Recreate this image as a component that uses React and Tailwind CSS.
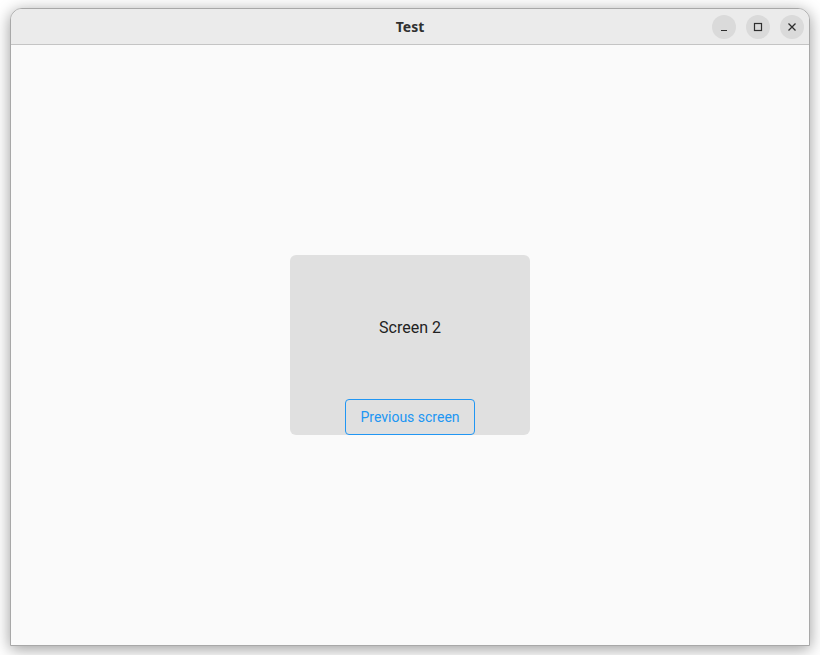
import React from "react";

const App = () => {
  return (
    <div className="w-[820px] h-[655px] bg-white pt-[8px] pl-[10px] overflow-hidden">
      {/* Window */}
      <div className="w-[800px] h-[638px] flex flex-col rounded-t-[12px] border border-[#a8a8a8] bg-[#fafafa] shadow-[0_3px_16px_rgba(0,0,0,0.4)] overflow-hidden">
        {/* Title bar */}
        <div className="relative h-[36px] shrink-0 flex items-center justify-center bg-[#ebebeb] border-b border-[#c4c4c4]">
          <span className="text-[14px] font-bold text-[#303030] font-['Noto_Sans',sans-serif]">
            Test
          </span>
          <div className="absolute right-[5px] top-[6px] flex gap-[10px]">
            <button className="w-[24px] h-[24px] rounded-full bg-[#dadada] flex items-center justify-center">
              <svg width="10" height="10" viewBox="0 0 10 10">
                <path d="M2 8.5h6" stroke="#2e2e2e" strokeWidth="1.2" />
              </svg>
            </button>
            <button className="w-[24px] h-[24px] rounded-full bg-[#dadada] flex items-center justify-center">
              <svg width="10" height="10" viewBox="0 0 10 10">
                <rect x="1.5" y="1.5" width="7" height="7" fill="none" stroke="#2e2e2e" strokeWidth="1.2" />
              </svg>
            </button>
            <button className="w-[24px] h-[24px] rounded-full bg-[#dadada] flex items-center justify-center">
              <svg width="10" height="10" viewBox="0 0 10 10">
                <path d="M1.5 1.5l7 7M8.5 1.5l-7 7" stroke="#2e2e2e" strokeWidth="1.3" />
              </svg>
            </button>
          </div>
        </div>

        {/* Content */}
        <div className="flex-1 flex items-center justify-center">
          <div className="w-[240px] h-[180px] bg-[#e0e0e0] rounded-[6px] flex flex-col items-center font-['Roboto',sans-serif]">
            <div className="flex-1 flex items-center justify-center pt-[2px] text-[16px] text-[#222222]">
              Screen 2
            </div>
            <button className="w-[130px] h-[36px] rounded-[4px] border border-[#2196f3] pt-[1px] text-[14px] text-[#2196f3]">
              Previous screen
            </button>
          </div>
        </div>
      </div>
    </div>
  );
};

export default App;
